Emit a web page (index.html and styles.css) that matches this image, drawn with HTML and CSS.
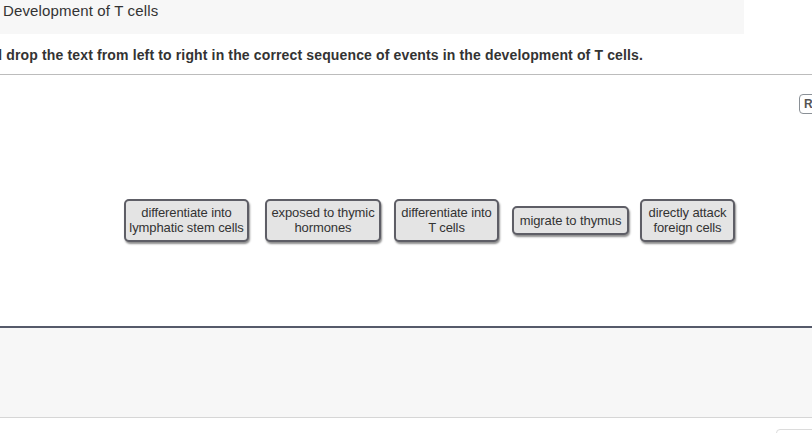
FILE: index.html
```html
<!DOCTYPE html>
<html>
<head>
<meta charset="utf-8">
<link rel="stylesheet" href="styles.css">
</head>
<body>
<div class="page">
  <div class="title">Development of T cells</div>
  <div class="instructions"><span class="instr-text">and drop the text from left to right in the correct sequence of events in the development of T cells.</span></div>
  <div class="workspace">
    <div class="toolbar"><button class="reset">Reset</button></div>
    <div class="tiles">
      <div class="tile two t1">differentiate into<br>lymphatic stem cells</div>
      <div class="tile two t2">exposed to thymic<br>hormones</div>
      <div class="tile two t3">differentiate into<br>T cells</div>
      <div class="tile one t4">migrate to thymus</div>
      <div class="tile two t5">directly attack<br>foreign cells</div>
    </div>
  </div>
  <div class="dropzone"></div>
  <div class="footer"><div class="footer-btn"></div></div>
</div>
</body>
</html>
```
FILE: styles.css
```css
html, body {
  margin: 0;
  padding: 0;
  background: #ffffff;
  font-family: "Liberation Sans", Arial, Helvetica, sans-serif;
  color: #333333;
}
.page {
  width: 812px;
  height: 433px;
  overflow: hidden;
}
.title {
  width: 741px;
  height: 34px;
  background: #f7f7f7;
  padding-left: 3px;
  font-size: 15px;
  letter-spacing: 0.15px;
  line-height: 21px;
  color: #333;
}
.instructions {
  box-sizing: border-box;
  height: 41px;
  border-bottom: 1px solid #bcbcbc;
  overflow: hidden;
  white-space: nowrap;
  font-size: 14px;
  font-weight: bold;
  letter-spacing: 0.14px;
  line-height: 40px;
  color: #333;
}
.instr-text {
  display: inline-block;
  margin-left: -23px;
  padding-top: 1px;
}
.workspace {
  height: 251px;
  display: flex;
  flex-direction: column;
}
.toolbar {
  display: flex;
  justify-content: flex-end;
  padding-top: 19px;
  margin-right: -40px;
}
.reset {
  font-family: "Liberation Sans", Arial, sans-serif;
  font-size: 12px;
  font-weight: bold;
  color: #555;
  background: #fff;
  border: 1px solid #8a9096;
  border-radius: 4px;
  height: 20px;
  padding: 0 4px;
  width: 53px;
  text-align: left;
}
.tiles {
  display: flex;
  align-items: center;
  gap: 12px;
  padding-left: 124px;
  margin-top: 85px;
}
.tile {
  box-sizing: border-box;
  background: #e4e4e4;
  border: 2px solid #5e5e66;
  border-radius: 5px;
  box-shadow: 1px 2px 2px rgba(0, 0, 0, 0.45);
  font-size: 13px;
  line-height: 15px;
  letter-spacing: -0.1px;
  color: #333;
  text-align: center;
  white-space: nowrap;
}
.two { height: 43px; padding-top: 4px; }
.one { height: 29px; padding-top: 5px; }
.t1 { width: 125px; }
.t2 { width: 116px; margin-left: 4px; }
.t3 { width: 105px; margin-left: 1px; }
.t4 { width: 117px; margin-left: 1px; }
.t5 { width: 95px; margin-left: -1px; }
.dropzone {
  height: 89px;
  background: #f7f7f7;
  border-top: 2px solid #555a6a;
  border-bottom: 1px solid #d6d6d6;
}
.footer {
  display: flex;
  justify-content: flex-end;
  padding-top: 11px;
}
.footer-btn {
  width: 40px;
  height: 20px;
  border: 1px solid #dcdcdc;
  border-radius: 4px;
  margin-right: -6px;
}
```
